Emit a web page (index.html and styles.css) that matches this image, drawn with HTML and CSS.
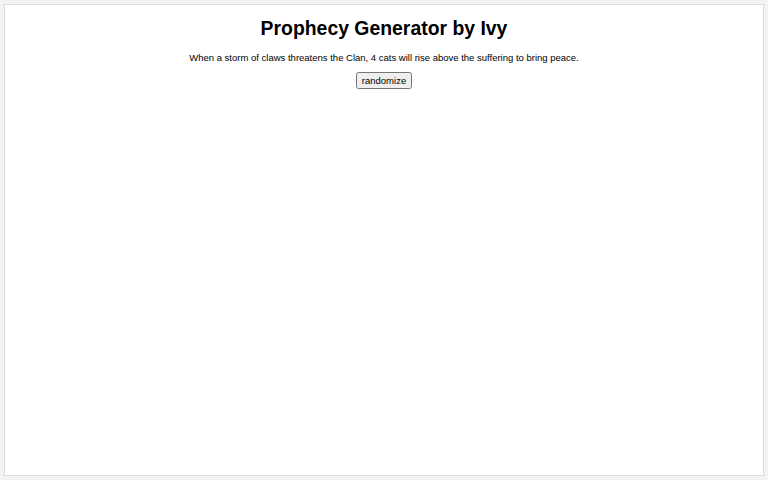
FILE: index.html
```html
<!DOCTYPE html>
<html lang="en">
<head>
    <meta charset="UTF-8">
    <meta name="viewport" content="width=device-width, initial-scale=1.0">
    <title>Prophecy Generator by Ivy</title>
    <link rel="stylesheet" href="styles.css">
</head>
<body>
    <div class="page">
        <h1>Prophecy Generator by Ivy</h1>
        <p id="prophecy">When a storm of claws threatens the Clan, 4 cats will rise above the suffering to bring peace.</p>
        <button onclick="randomize()">randomize</button>
    </div>

    <script>
        var events = ['a storm of claws threatens the Clan', 'the river runs red', 'the stars fall silent', 'fire meets water'];
        var endings = ['rise above the suffering to bring peace', 'save the Clan from darkness', 'light the path home'];

        function pick(list) {
            return list[Math.floor(Math.random() * list.length)];
        }

        function randomize() {
            var count = Math.floor(Math.random() * 5) + 1;
            var text = 'When ' + pick(events) + ', ' + count + ' cats will ' + pick(endings) + '.';
            document.getElementById('prophecy').textContent = text;
        }
    </script>
</body>
</html>
```

FILE: styles.css
```css
html, body {
    height: 100%;
}

body {
    font-family: "Liberation Sans", Arial, sans-serif;
    background-color: #f2f2f2;
    color: #000;
    margin: 0;
    padding: 4px;
    box-sizing: border-box;
}

.page {
    background-color: #fff;
    border: 1px solid #dcdcdc;
    height: 100%;
    box-sizing: border-box;
    text-align: center;
    padding-top: 11px;
}

h1 {
    font-size: 19.4px;
    line-height: 24px;
    margin: 0 0 12px;
}

p {
    font-size: 9.5px;
    line-height: 12px;
    margin: 0 0 6px;
}

button {
    font-family: "Liberation Sans", Arial, sans-serif;
    font-size: 9.5px;
    line-height: 11px;
    padding: 1px 4px;
}
```
